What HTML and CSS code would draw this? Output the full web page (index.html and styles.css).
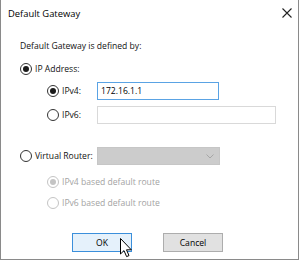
FILE: index.html
```html
<!DOCTYPE html>
<html>
<head>
<meta charset="utf-8">
<link rel="stylesheet" href="styles.css">
</head>
<body>
<div class="window">
  <div class="titlebar">
    <span class="title">Default Gateway</span>
    <svg class="close" width="10" height="10" viewBox="0 0 10 10"><path d="M0.5 0.5 L9.5 9.5 M9.5 0.5 L0.5 9.5" stroke="#222" stroke-width="1.1" fill="none"/></svg>
  </div>
  <div class="content">
    <div class="row label-row">Default Gateway is defined by:</div>
    <div class="row opt">
      <span class="radio on"></span><span class="txt">IP Address:</span>
    </div>
    <div class="row sub field-row r4">
      <span class="radio on"></span><span class="txt lbl-sub">IPv4:</span>
      <span class="input focus">172.16.1.1</span>
    </div>
    <div class="row sub field-row r6">
      <span class="radio"></span><span class="txt lbl-sub">IPv6:</span>
      <span class="input wide"></span>
    </div>
    <div class="row field-row vr">
      <span class="radio"></span><span class="txt lbl-vr">Virtual Router:</span>
      <span class="combo"><svg width="8" height="5" viewBox="0 0 8 5"><path d="M0.5 0.5 L4 4 L7.5 0.5" stroke="#a6a6a6" stroke-width="1" fill="none"/></svg></span>
    </div>
    <div class="row sub opt dis d4">
      <span class="radio on disabled"></span><span class="txt">IPv4 based default route</span>
    </div>
    <div class="row sub opt dis d6">
      <span class="radio disabled"></span><span class="txt">IPv6 based default route</span>
    </div>
    <div class="buttons">
      <span class="btn default">OK</span>
      <span class="btn">Cancel</span>
    </div>
  </div>
  <svg class="cursor" width="13" height="20" viewBox="0 0 13 20"><path d="M0.5 0.5 L0.5 16 L4 12.6 L6.6 18.6 L9 17.6 L6.5 11.8 L11.3 11.8 Z" fill="#fff" stroke="#000" stroke-width="1" stroke-linejoin="miter"/></svg>
</div>
</body>
</html>
```
FILE: styles.css
```css
html, body {
  margin: 0;
  padding: 0;
  background: #ffffff;
}
body {
  font-family: "Open Sans", "Noto Sans", sans-serif;
  font-size: 8.6px;
  color: #111;
}
.window {
  position: relative;
  width: 297px;
  height: 259px;
  border-left: 1px solid #8a8a8a;
  border-right: 1px solid #8a8a8a;
  border-bottom: 1px solid #8a8a8a;
  background: #fff;
}
.titlebar {
  height: 26px;
  display: flex;
  align-items: center;
  justify-content: space-between;
  padding: 0 6px 0 7px;
}
.title {
  font-size: 9.4px;
  color: #000;
}
.close {
  display: block;
}
.content {
  padding-left: 19px;
  display: flex;
  flex-direction: column;
}
.row {
  display: flex;
  align-items: center;
  height: 16px;
}
.label-row {
  margin-top: 12px;
}
.opt {
  margin-top: 7px;
}
.sub {
  padding-left: 27px;
}
.field-row {
  height: 18px;
}
.r4 { margin-top: 5px; }
.r6 { margin-top: 6px; }
.vr { margin-top: 23px; }
.d4 { margin-top: 9px; }
.d6 { margin-top: 5px; }
.radio {
  box-sizing: border-box;
  width: 12px;
  height: 12px;
  border: 1px solid #333;
  border-radius: 50%;
  background: #fff;
  display: flex;
  align-items: center;
  justify-content: center;
  flex: none;
}
.radio.on::after {
  content: "";
  width: 6px;
  height: 6px;
  border-radius: 50%;
  background: #1a1a1a;
}
.radio.disabled {
  border-color: #c4c4c4;
}
.radio.on.disabled::after {
  background: #c4c4c4;
}
.txt {
  margin-left: 3px;
  white-space: nowrap;
}
.lbl-sub {
  width: 35px;
}
.lbl-vr {
  width: 62px;
}
.dis .txt {
  color: #a3a3a3;
}
.input {
  box-sizing: border-box;
  height: 18px;
  width: 122px;
  border: 1px solid #d9d9d9;
  background: #fff;
  display: flex;
  align-items: center;
  padding-left: 3px;
  color: #000;
}
.input.focus {
  border-color: #5aa3e4;
}
.input.wide {
  width: 179px;
}
.combo {
  box-sizing: border-box;
  height: 18px;
  width: 123px;
  background: #cccccc;
  border: 1px solid #c6c6c6;
  display: flex;
  align-items: center;
  justify-content: flex-end;
  padding-right: 5px;
}
.combo svg {
  display: block;
}
.buttons {
  display: flex;
  margin-top: 22px;
  margin-left: 52px;
  gap: 31px;
}
.btn {
  box-sizing: border-box;
  width: 60px;
  height: 19px;
  border: 1px solid #adadad;
  background: #e1e1e1;
  display: flex;
  align-items: center;
  justify-content: center;
  color: #000;
}
.btn.default {
  border-color: #3b8fdb;
  background: #e5f1fb;
}
.cursor {
  position: absolute;
  left: 119px;
  top: 238px;
}
```
